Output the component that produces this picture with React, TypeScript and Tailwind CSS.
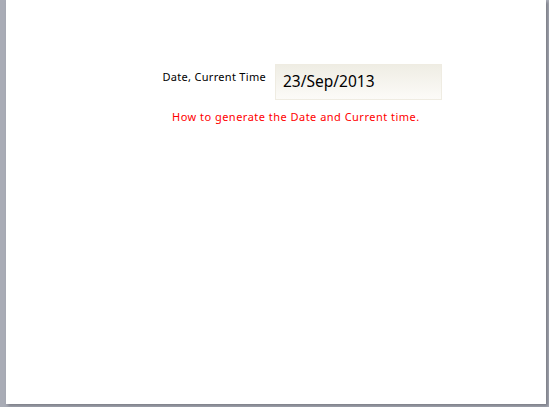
export default function App() {
  return (
    <div className="flex h-[407px] w-[549px] bg-[#a9acb6] pl-[6px] pr-[3px] pb-[3px]">
      <div className="flex h-[404px] flex-1 flex-col bg-white shadow-[2px_2px_3px_rgba(80,80,90,0.5)] font-['Noto_Sans',sans-serif]">
        <div className="flex items-start pt-[64px]">
          <div className="w-[260px] pt-[6px] text-right text-[11px] leading-[14px] tracking-[0.3px] text-black">
            Date, Current Time
          </div>
          <div className="ml-[9px] flex h-[36px] w-[167px] items-center border border-[#efece2] bg-gradient-to-b from-[#efede4] to-[#fcfbf8] pl-[7px] text-[15.5px] text-black">
            23/Sep/2013
          </div>
        </div>
        <div className="pl-[166px] pt-[10px] text-[11px] leading-[14px] tracking-[0.48px] text-[#ff0000]">
          How to generate the Date and Current time.
        </div>
      </div>
    </div>
  );
}
